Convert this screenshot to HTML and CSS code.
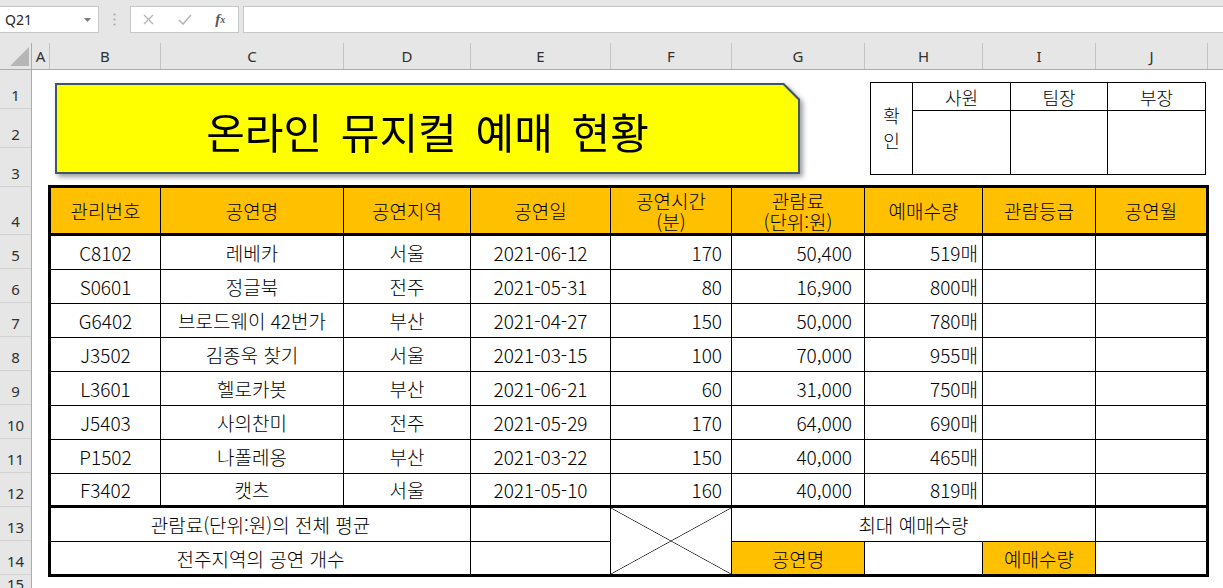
FILE: index.html
```html
<!DOCTYPE html>
<html lang="ko">
<head>
<meta charset="utf-8">
<title>온라인 뮤지컬 예매 현황</title>
<link rel="stylesheet" href="styles.css">
</head>
<body>
<div class="app">
  <div class="fbar">
    <div class="namebox">
      <span>Q21</span>
      <svg class="caret" width="7" height="4" viewBox="0 0 7 4"><path d="M0 0H7L3.5 4Z" fill="#7a7a7a"/></svg>
    </div>
    <div class="fsep">
      <svg width="3" height="13" viewBox="0 0 3 13"><circle cx="1.5" cy="1.5" r="1.1" fill="#a8a8a8"/><circle cx="1.5" cy="6.5" r="1.1" fill="#a8a8a8"/><circle cx="1.5" cy="11.5" r="1.1" fill="#a8a8a8"/></svg>
    </div>
    <div class="fbtns">
      <span class="fslot"><svg width="11" height="11" viewBox="0 0 11 11"><path d="M1 1L10 10M10 1L1 10" stroke="#b4b4b4" stroke-width="1.3" fill="none"/></svg></span>
      <span class="fslot"><svg width="14" height="11" viewBox="0 0 14 11"><path d="M1 6L5 10L13 1" stroke="#b4b4b4" stroke-width="1.5" fill="none"/></svg></span>
      <span class="fslot fx"><i>f</i><sub>x</sub></span>
    </div>
    <div class="finput"></div>
  </div>

  <div class="sheet">
    <div class="corner">
      <svg width="19" height="19" viewBox="0 0 19 19"><path d="M19 0V19H0Z" fill="#b6b6b6"/></svg>
    </div>
    <div class="colhdrs">
      <div class="ch w-a">A</div>
      <div class="ch w-b">B</div>
      <div class="ch w-c">C</div>
      <div class="ch w-d">D</div>
      <div class="ch w-e">E</div>
      <div class="ch w-f">F</div>
      <div class="ch w-g">G</div>
      <div class="ch w-h">H</div>
      <div class="ch w-i">I</div>
      <div class="ch w-j">J</div>
      <div class="ch w-k"></div>
    </div>
    <div class="rowhdrs">
      <div class="rh h39">1</div>
      <div class="rh h39">2</div>
      <div class="rh h39">3</div>
      <div class="rh h48">4</div>
      <div class="rh h34">5</div>
      <div class="rh h34">6</div>
      <div class="rh h34">7</div>
      <div class="rh h34">8</div>
      <div class="rh h34">9</div>
      <div class="rh h34">10</div>
      <div class="rh h34">11</div>
      <div class="rh h34">12</div>
      <div class="rh h34">13</div>
      <div class="rh h34">14</div>
      <div class="rh hrest">15</div>
    </div>

    <div class="cells">
      <div class="top">
        <div class="title-wrap">
          <div class="title-border">
            <div class="title">온라인 뮤지컬 예매 현황</div>
          </div>
        </div>
        <div class="approve">
          <div class="ap side">확<br>인</div>
          <div class="ap">사원</div>
          <div class="ap">팀장</div>
          <div class="ap lc">부장</div>
          <div class="ap lr"></div>
          <div class="ap lr"></div>
          <div class="ap lr lc"></div>
        </div>
      </div>

      <div class="tbl">
        <div class="c hd">관리번호</div>
        <div class="c hd">공연명</div>
        <div class="c hd">공연지역</div>
        <div class="c hd">공연일</div>
        <div class="c hd two"><span class="ln">공연시간</span><span class="ln">(분)</span></div>
        <div class="c hd two"><span class="ln">관람료</span><span class="ln">(단위:원)</span></div>
        <div class="c hd">예매수량</div>
        <div class="c hd">관람등급</div>
        <div class="c hd lc">공연월</div>

        <div class="c">C8102</div><div class="c">레베카</div><div class="c">서울</div><div class="c">2021-06-12</div><div class="c num pf">170</div><div class="c num pg">50,400</div><div class="c num ph">519매</div><div class="c"></div><div class="c lc"></div>
        <div class="c">S0601</div><div class="c">정글북</div><div class="c">전주</div><div class="c">2021-05-31</div><div class="c num pf">80</div><div class="c num pg">16,900</div><div class="c num ph">800매</div><div class="c"></div><div class="c lc"></div>
        <div class="c">G6402</div><div class="c">브로드웨이 42번가</div><div class="c">부산</div><div class="c">2021-04-27</div><div class="c num pf">150</div><div class="c num pg">50,000</div><div class="c num ph">780매</div><div class="c"></div><div class="c lc"></div>
        <div class="c">J3502</div><div class="c">김종욱 찾기</div><div class="c">서울</div><div class="c">2021-03-15</div><div class="c num pf">100</div><div class="c num pg">70,000</div><div class="c num ph">955매</div><div class="c"></div><div class="c lc"></div>
        <div class="c">L3601</div><div class="c">헬로카봇</div><div class="c">부산</div><div class="c">2021-06-21</div><div class="c num pf">60</div><div class="c num pg">31,000</div><div class="c num ph">750매</div><div class="c"></div><div class="c lc"></div>
        <div class="c">J5403</div><div class="c">사의찬미</div><div class="c">전주</div><div class="c">2021-05-29</div><div class="c num pf">170</div><div class="c num pg">64,000</div><div class="c num ph">690매</div><div class="c"></div><div class="c lc"></div>
        <div class="c">P1502</div><div class="c">나폴레옹</div><div class="c">부산</div><div class="c">2021-03-22</div><div class="c num pf">150</div><div class="c num pg">40,000</div><div class="c num ph">465매</div><div class="c"></div><div class="c lc"></div>
        <div class="c r12">F3402</div><div class="c r12">캣츠</div><div class="c r12">서울</div><div class="c r12">2021-05-10</div><div class="c r12 num pf">160</div><div class="c r12 num pg">40,000</div><div class="c r12 num ph">819매</div><div class="c r12"></div><div class="c r12 lc"></div>

        <div class="c span3">관람료(단위:원)의 전체 평균</div>
        <div class="c"></div>
        <div class="c cross lr"></div>
        <div class="c span3">최대 예매수량</div>
        <div class="c lc"></div>

        <div class="c span3 lr">전주지역의 공연 개수</div>
        <div class="c lr"></div>
        <div class="c hd-lite lr">공연명</div>
        <div class="c lr"></div>
        <div class="c hd-lite lr">예매수량</div>
        <div class="c lr lc"></div>
      </div>
    </div>
  </div>
</div>
</body>
</html>
```

FILE: styles.css
```css
* { box-sizing: border-box; }

body {
  margin: 0;
  width: 1223px;
  height: 588px;
  overflow: hidden;
  background: #fff;
  font-family: "Noto Sans CJK KR", sans-serif;
}

/* ---------- formula bar ---------- */
.fbar {
  height: 43px;
  background: #e6e6e6;
  display: flex;
  align-items: flex-start;
  padding-top: 6px;
}

.namebox {
  width: 99px;
  height: 27px;
  background: #fff;
  border: 1px solid #c6c6c6;
  border-left: none;
  display: flex;
  align-items: center;
  justify-content: space-between;
  padding: 0 7px 0 5px;
  font-family: "Noto Sans", sans-serif;
  font-size: 14px;
  color: #262626;
}

.fsep {
  width: 31px;
  height: 27px;
  display: flex;
  align-items: center;
  justify-content: center;
}

.fbtns {
  width: 109px;
  height: 27px;
  background: #fff;
  border: 1px solid #c6c6c6;
  display: flex;
  align-items: center;
}

.fslot {
  width: 36px;
  height: 25px;
  display: flex;
  align-items: center;
  justify-content: center;
}

.fx {
  font-family: "Liberation Serif", serif;
  font-size: 15px;
  color: #555;
  font-weight: bold;
}

.fx i { font-style: italic; }
.fx sub { font-size: 10px; font-style: italic; vertical-align: -1px; }

.finput {
  margin-left: 4px;
  flex: 1;
  height: 27px;
  background: #fff;
  border: 1px solid #c6c6c6;
  border-right: none;
}

/* ---------- sheet frame ---------- */
.sheet {
  display: grid;
  grid-template-columns: 32px 1fr;
  grid-template-rows: 27px 1fr;
  height: 545px;
}

.corner {
  background: #e6e6e6;
  border-right: 1px solid #ababab;
  border-bottom: 1px solid #ababab;
  display: flex;
  align-items: flex-end;
  justify-content: flex-end;
  padding: 0 2px 3px 0;
}

.colhdrs {
  display: flex;
  background: #e6e6e6;
  border-bottom: 1px solid #ababab;
}

.ch {
  flex: none;
  height: 26px;
  border-right: 1px solid #c4c4c4;
  display: flex;
  align-items: center;
  justify-content: center;
  font-family: "Noto Sans", sans-serif;
  font-size: 15px;
  color: #303030;
}

.w-a { width: 18px; }
.w-b { width: 111px; }
.w-c { width: 183px; }
.w-d { width: 127px; }
.w-e { width: 140px; }
.w-f { width: 121px; }
.w-g { width: 133px; }
.w-h { width: 118px; }
.w-i { width: 113px; }
.w-j { width: 112px; }
.w-k { flex: 1; border-right: none; }

.rowhdrs {
  background: #e6e6e6;
  border-right: 1px solid #ababab;
  display: flex;
  flex-direction: column;
}

.rh {
  flex: none;
  border-bottom: 1px solid #d2d2d2;
  display: flex;
  align-items: flex-end;
  justify-content: center;
  padding-bottom: 5px;
  font-family: "Noto Sans", sans-serif;
  font-size: 15px;
  line-height: 16px;
  color: #303030;
}

.h39 { height: 39px; }
.h48 { height: 48px; }
.h34 { height: 34px; }
.hrest { flex: 1; border-bottom: none; padding-bottom: 0; align-items: flex-start; padding-top: 1px; }

/* ---------- cell area ---------- */
.cells {
  display: flex;
  flex-direction: column;
  align-items: flex-start;
}

.top {
  height: 115px;
  display: flex;
  align-items: flex-start;
  padding: 12px 0 0 23px;
}

.title-wrap {
  margin-top: 1px;
  width: 745px;
  height: 91px;
  filter: drop-shadow(3px 3px 2.5px rgba(0, 0, 0, 0.38));
}

.title-border {
  width: 100%;
  height: 100%;
  padding: 2px;
  background: #3f5470;
  clip-path: polygon(0 0, calc(100% - 16px) 0, 100% 16px, 100% 100%, 0 100%);
}

.title {
  width: 100%;
  height: 100%;
  background: #ffff00;
  clip-path: polygon(0 0, calc(100% - 15px) 0, 100% 15px, 100% 100%, 0 100%);
  display: flex;
  align-items: center;
  justify-content: center;
  padding-top: 3px;
  font-size: 42px;
  font-weight: 400;
  word-spacing: 7px;
  color: #000;
  white-space: nowrap;
}

.approve {
  margin-left: 70px;
  display: grid;
  grid-template-columns: 42px 98px 97px 97px;
  grid-template-rows: 28px 63px;
  border: 1px solid #000;
}

.ap {
  border-right: 1px solid #000;
  border-bottom: 1px solid #000;
  display: flex;
  align-items: center;
  justify-content: center;
  font-size: 18px;
  font-weight: 300;
  line-height: 20px;
  color: #000;
}

.ap.side {
  grid-row: span 2;
  border-bottom: none;
  text-align: center;
  line-height: 25px;
  padding-bottom: 2px;
}

.lc { border-right: none; }
.lr { border-bottom: none; }

/* ---------- data table ---------- */
.tbl {
  margin-left: 16px;
  display: grid;
  grid-template-columns: 110px 183px 127px 140px 121px 133px 118px 113px 110px;
  grid-template-rows: 48px repeat(8, 34px) 34px 32px;
  border: 3px solid #000;
}

.c {
  border-right: 1px solid #000;
  border-bottom: 1px solid #000;
  display: flex;
  align-items: center;
  justify-content: center;
  text-align: center;
  font-size: 19px;
  font-weight: 300;
  line-height: 22px;
  color: #000;
  white-space: nowrap;
  padding-top: 1px;
}

.c.lc { border-right: none; }
.c.lr { border-bottom: none; }

.hd {
  background: #ffc000;
  border-bottom: 3px solid #000;
  padding-top: 0;
}

.two {
  flex-direction: column;
}

.ln {
  display: block;
  height: 21px;
  line-height: 21px;
  overflow: visible;
}

.hd-lite { background: #ffc000; }

.r12 { border-bottom: 3px solid #000; }

.num { justify-content: flex-end; }
.pf { padding-right: 9px; }
.pg { padding-right: 12px; }
.ph { padding-right: 4px; }

.span3 { grid-column: span 3; }

.cross {
  grid-row: span 2;
  background:
    linear-gradient(to top right, transparent calc(50% - 0.7px), #222 50%, transparent calc(50% + 0.7px)),
    linear-gradient(to bottom right, transparent calc(50% - 0.7px), #222 50%, transparent calc(50% + 0.7px));
}
```
